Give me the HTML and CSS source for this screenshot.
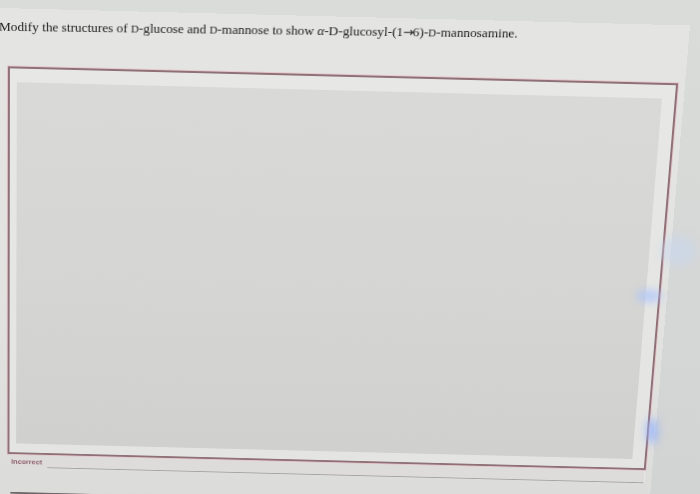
FILE: index.html
```html
<!DOCTYPE html>
<html>
<head>
<meta charset="utf-8">
<link rel="stylesheet" href="styles.css">
</head>
<body>
<div class="sheet">
  <p class="question">Modify the structures of <span class="sc">D</span>-glucose and <span class="sc">D</span>-mannose to show <i class="alpha">α</i>-D-glucosyl-(1<span class="arrow">→</span>6)-<span class="sc">D</span>-mannosamine.</p>
  <div class="canvas-box">
    <div class="canvas"></div>
  </div>
  <div class="feedback">
    <span class="status">Incorrect</span>
    <span class="rule"></span>
  </div>
  <div class="next"></div>
</div>
<div class="glare glare-a"></div>
<div class="glare glare-b"></div>
<div class="glare glare-c"></div>
</body>
</html>
```

FILE: styles.css
```css
html, body {
  margin: 0;
  padding: 0;
}
body {
  width: 700px;
  height: 494px;
  overflow: hidden;
  position: relative;
  background: linear-gradient(180deg, #dadcd9 0%, #d6d8d7 50%, #d2d3d3 100%);
  font-family: "Liberation Serif", "Times New Roman", serif;
}
.sheet {
  margin-top: 8px;
  width: 690px;
  height: 600px;
  box-sizing: border-box;
  padding-top: 11px;
  background: linear-gradient(180deg, #e4e5e2 0%, #e2e3e0 50%, #dcdcda 85%, #d6d5d4 100%);
  transform-origin: 0 0;
  transform: skewY(1.45deg) perspective(1000px) rotateX(-7deg);
}
.question {
  margin: 0;
  padding-left: 0;
  text-indent: -1px;
  font-size: 13.3px;
  line-height: 16px;
  color: #1c1c1c;
  white-space: nowrap;
  transform-origin: 0 0;
  transform: skewY(-0.7deg);
}
.sc {
  font-size: 0.82em;
}
.alpha {
  font-style: italic;
}
.arrow {
  font-family: "DejaVu Sans", sans-serif;
  font-size: 0.95em;
  letter-spacing: -1px;
}
.canvas-box {
  margin: 32px 0 0 8px;
  width: 675px;
  box-sizing: border-box;
  border: 2px solid #8e7077;
  box-shadow: 0 0 0 1px rgba(230, 175, 185, 0.55);
  padding: 14px 13px 10px 7px;
  background: linear-gradient(180deg, #e7e8e5 0%, #e4e4e2 100%);
}
.canvas {
  height: 388px;
  background: linear-gradient(180deg, #d9dad8 0%, #d5d5d3 55%, #d0d0ce 100%);
}
.feedback {
  display: flex;
  align-items: center;
  margin: 2px 0 0 11px;
  width: 672px;
  height: 13px;
  box-sizing: border-box;
  background: #dddcda;
  border-right: 1px solid #e8e8e6;
}
.status {
  font-family: "Liberation Sans", Arial, sans-serif;
  font-weight: bold;
  font-size: 7.6px;
  color: #8d5d6a;
  padding-left: 1px;
}
.rule {
  flex: 1;
  align-self: flex-end;
  margin-left: 5px;
  border-bottom: 1.5px solid #a6a5a5;
}
.next {
  margin: 28px 0 0 11px;
  width: 672px;
  border-top: 2px solid #6d676a;
}
.glare {
  position: absolute;
  border-radius: 50%;
  filter: blur(4px);
}
.glare-a {
  left: 636px;
  top: 290px;
  width: 26px;
  height: 12px;
  background: rgba(170, 195, 255, 0.75);
}
.glare-b {
  left: 646px;
  top: 418px;
  width: 12px;
  height: 26px;
  background: rgba(150, 180, 255, 0.8);
}
.glare-c {
  left: 660px;
  top: 236px;
  width: 36px;
  height: 30px;
  background: rgba(200, 215, 240, 0.55);
}
```
